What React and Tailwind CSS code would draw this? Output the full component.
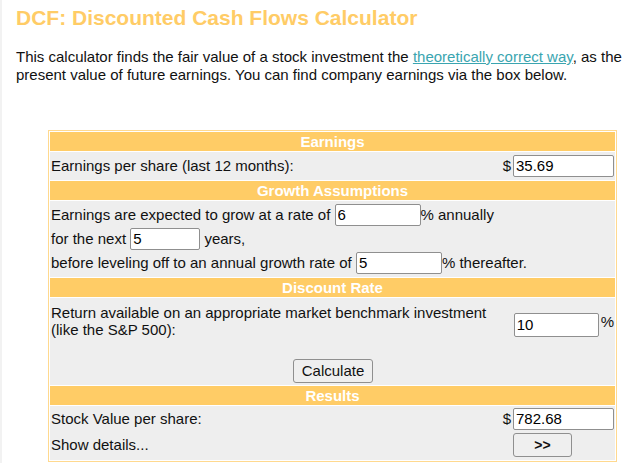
import React from "react";

function Header({ children }) {
  return (
    <div className="bg-[#ffcc66] text-white font-bold text-center h-[19px] leading-[19px]">
      {children}
    </div>
  );
}

function Field({ value, className = "" }) {
  return (
    <input
      readOnly
      value={value}
      className={`h-[22px] bg-white border border-[#8f8f8f] rounded-[2px] px-[2px] text-[15px] text-black outline-none ${className}`}
    />
  );
}

export default function App() {
  return (
    <div className="min-h-[463px] bg-white font-['Liberation_Sans',Arial,sans-serif] text-[#111] border-l-2 border-[#f2f2f2]">
      <div className="pl-[14px] pr-2">
        <h1 className="pt-[6px] text-[21px] font-bold text-[#ffcc66] leading-[24px]">
          DCF: Discounted Cash Flows Calculator
        </h1>
        <p className="mt-[18px] text-[15px] leading-[18px] pr-2">
          This calculator finds the fair value of a stock investment the{" "}
          <a className="text-[#3aa5b0] underline">theoretically correct way</a>, as the
          present value of future earnings. You can find company earnings via the box below.
        </p>
      </div>

      <div className="mt-[46px] ml-[46px] w-[569px] border border-[#ffd98f] p-px bg-white text-[15px]">
        <div className="flex flex-col gap-px">
          <Header>Earnings</Header>
          <div className="bg-[#eeeeee] h-[28px] flex items-center justify-between pl-px pr-px">
            <span>Earnings per share (last 12 months):</span>
            <span className="flex items-center gap-[2px]">
              $ <Field value="35.69" className="w-[101px]" />
            </span>
          </div>

          <Header>Growth Assumptions</Header>
          <div className="bg-[#eeeeee] flex flex-col pl-px py-[2px]">
            <div className="h-[24px] flex items-center">
              Earnings are expected to grow at a rate of&nbsp;
              <Field value="6" className="w-[86px]" />% annually
            </div>
            <div className="h-[24px] flex items-center">
              for the next&nbsp;
              <Field value="5" className="w-[70px]" />&nbsp;years,
            </div>
            <div className="h-[24px] flex items-center">
              before leveling off to an annual growth rate of&nbsp;
              <Field value="5" className="w-[86px]" />% thereafter.
            </div>
          </div>

          <Header>Discount Rate</Header>
          <div className="bg-[#eeeeee]">
            <div className="flex items-center justify-between pl-px pt-[3px] h-[50px]">
              <span className="leading-[17px] -mt-[8px]">
                Return available on an appropriate market benchmark investment
                <br />
                (like the S&amp;P 500):
              </span>
              <span className="flex items-start mr-px">
                <Field value="10" className="w-[85px] h-[24px]" />
                <span className="ml-[2px] -mt-[2px]">%</span>
              </span>
            </div>
            <div className="flex justify-center h-[37px] items-start pt-[11px]">
              <button className="h-[24px] w-[80px] bg-[#efefef] border border-[#8f8f8f] rounded-[3px] text-[15px] ml-[1px]">
                Calculate
              </button>
            </div>
          </div>

          <Header>Results</Header>
          <div className="bg-[#eeeeee] pb-[2px]">
            <div className="h-[26px] flex items-center justify-between pl-px pr-px">
              <span>Stock Value per share:</span>
              <span className="flex items-center gap-[2px]">
                $ <Field value="782.68" className="w-[101px]" />
              </span>
            </div>
            <div className="h-[26px] flex items-center justify-between pl-px pr-px">
              <span>Show details...</span>
              <span className="w-[101px] flex">
                <button className="h-[24px] w-[59px] bg-[#efefef] border border-[#8f8f8f] rounded-[3px] text-[14px] font-bold leading-none">
                  &gt;&gt;
                </button>
              </span>
            </div>
          </div>
        </div>
      </div>
    </div>
  );
}
